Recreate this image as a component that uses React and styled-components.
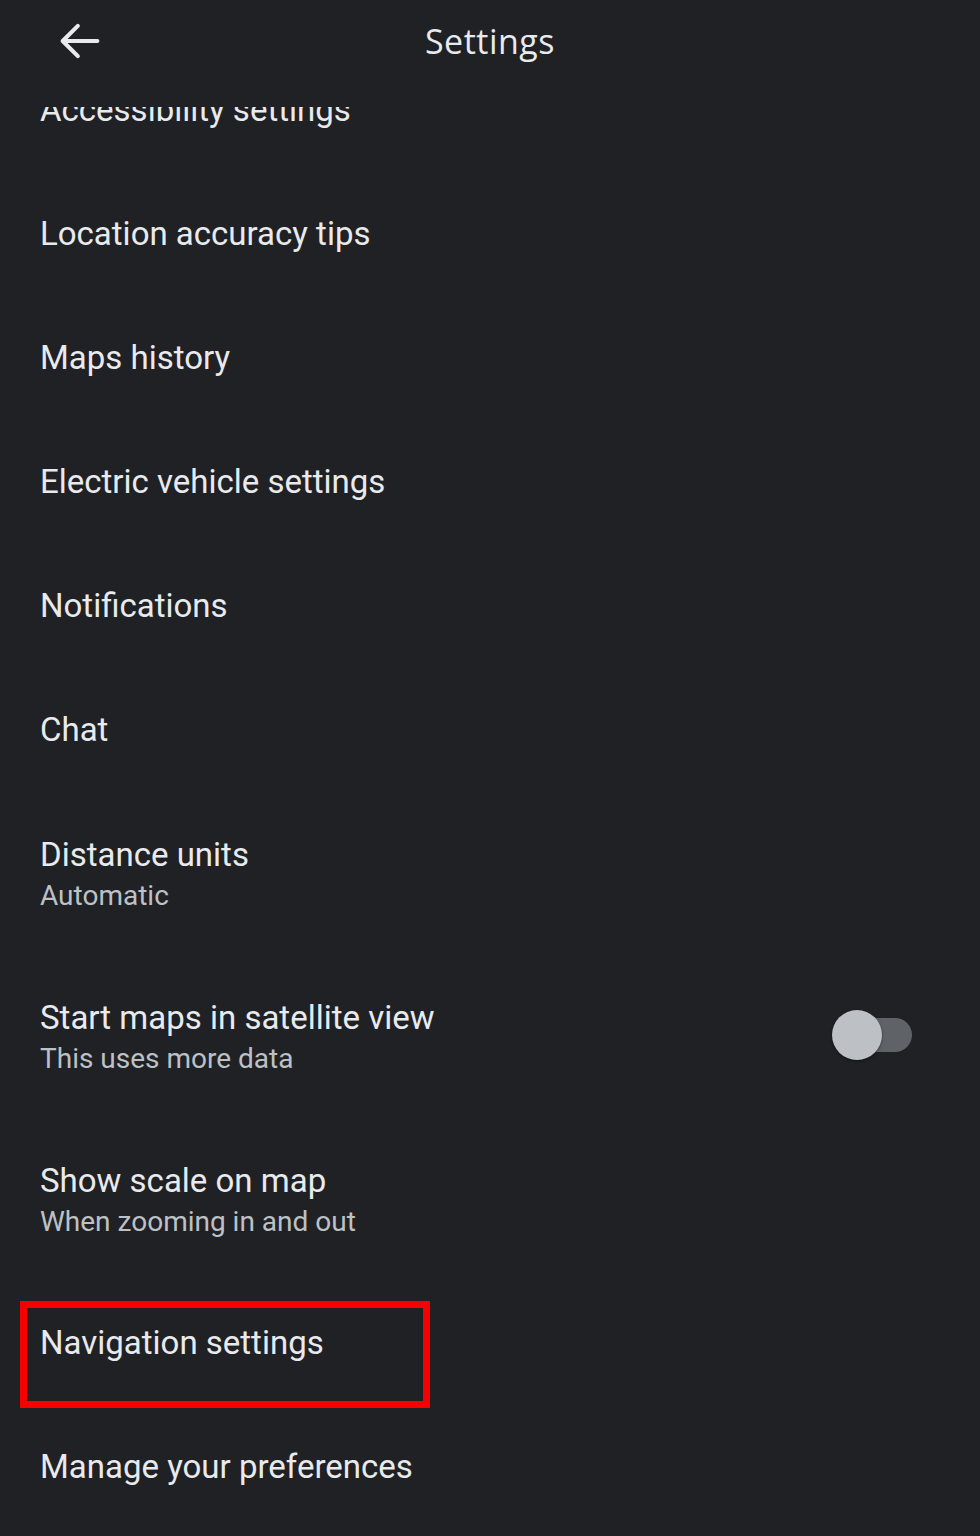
import React from 'react'
import styled, { createGlobalStyle } from 'styled-components'

const GlobalStyle = createGlobalStyle`
html, body {
margin:0;
padding:0;
background-color:#202124;
}
body {
font-family:Roboto, "Noto Sans", sans-serif;
color:#e8eaed;
}
`

const items = [
    { title: 'Accessibility settings' },
    { title: 'Location accuracy tips' },
    { title: 'Maps history' },
    { title: 'Electric vehicle settings' },
    { title: 'Notifications' },
    { title: 'Chat' },
    { title: 'Distance units', sub: 'Automatic' },
    { title: 'Start maps in satellite view', sub: 'This uses more data', toggle: true },
    { title: 'Show scale on map', sub: 'When zooming in and out' },
    { title: 'Navigation settings', marked: true },
    { title: 'Manage your preferences' },
]

const BackArrow = () => (
    <svg width="52" height="52" viewBox="0 0 24 24">
        <path d="M20 12H4.5M11 5l-7 7 7 7" fill="none" stroke="#e8eaed" strokeWidth="1.9" strokeLinecap="round" strokeLinejoin="round" />
    </svg>
)

const Settings = () => {
    return (
        <Page>
            <GlobalStyle />
            <Header>
                <BackButton><BackArrow /></BackButton>
                <Title>Settings</Title>
            </Header>
            <Scroller>
                <List>
                    {items.map((item) => (
                        <Row key={item.title} $double={!!item.sub}>
                            <Texts>
                                <RowTitle>{item.title}</RowTitle>
                                {item.sub && <RowSub>{item.sub}</RowSub>}
                            </Texts>
                            {item.toggle && (
                                <Switch>
                                    <Track />
                                    <Thumb />
                                </Switch>
                            )}
                            {item.marked && <Highlight />}
                        </Row>
                    ))}
                </List>
            </Scroller>
        </Page>
    )
}

const Page = styled.div`
width:980px;
height:1536px;
overflow:hidden;
background-color:#202124;
display:flex;
flex-direction:column;
`

const Header = styled.header`
position:relative;
z-index:2;
height:107px;
flex-shrink:0;
background-color:#202124;
display:flex;
align-items:flex-start;
justify-content:center;
`

const BackButton = styled.div`
position:absolute;
left:54px;
top:15px;
width:52px;
height:52px;
display:flex;
`

const Title = styled.h1`
margin:0;
padding-top:17px;
font-family:"Open Sans", Roboto, sans-serif;
font-weight:400;
font-size:34px;
line-height:48px;
letter-spacing:0.5px;
color:#e8eaed;
`

const Scroller = styled.div`
flex:1;
overflow:hidden;
`

const List = styled.div`
margin-top:-59px;
display:flex;
flex-direction:column;
`

const Row = styled.div`
position:relative;
height:${(p) => (p.$double ? '163px' : '124px')};
box-sizing:border-box;
padding:${(p) => (p.$double ? '43px 68px 0 40px' : '0 68px 0 40px')};
display:flex;
align-items:${(p) => (p.$double ? 'flex-start' : 'center')};
justify-content:space-between;
`

const Texts = styled.div`
display:flex;
flex-direction:column;
`

const RowTitle = styled.div`
font-size:33px;
line-height:40px;
color:#e8eaed;
`

const RowSub = styled.div`
font-size:28px;
line-height:42px;
color:#bdc1c6;
`

const Switch = styled.div`
position:relative;
width:80px;
height:50px;
margin-top:12px;
`

const Track = styled.div`
position:absolute;
left:8px;
right:0;
top:8px;
height:34px;
border-radius:17px;
background-color:#5f6368;
`

const Thumb = styled.div`
position:absolute;
left:0;
top:0;
width:50px;
height:50px;
border-radius:50%;
background-color:#bdc1c6;
box-shadow:0 1px 3px rgba(0,0,0,0.45);
`

const Highlight = styled.div`
position:absolute;
left:20px;
top:20px;
width:410px;
height:107px;
box-sizing:border-box;
border:7px solid #f70000;
pointer-events:none;
`

export default Settings
